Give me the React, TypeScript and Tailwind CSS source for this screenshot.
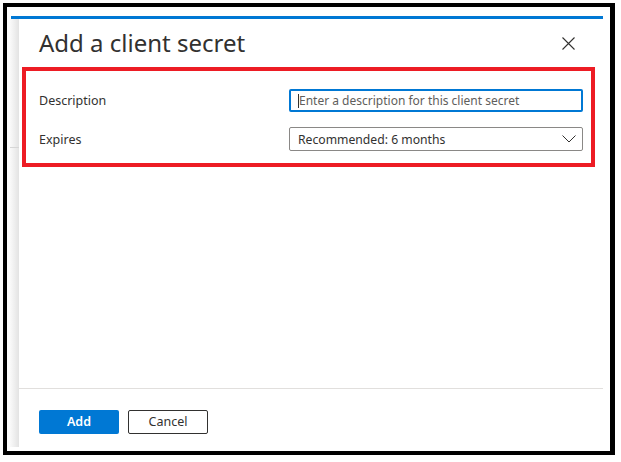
import React from 'react';

// Blade for creating a new client secret
export default function App() {
  return (
    <div className="w-[621px] h-[462px] bg-white pt-[3px] pl-[3px]" style={{ fontFamily: '"Noto Sans", "Open Sans", sans-serif' }}>
      <div className="relative w-[612px] h-[452px] border-[4px] border-r-[5px] border-black bg-white flex flex-col pt-[9px] pl-[3px] pr-[7px] pb-[4px]">
        {/* portal accent bar */}
        <div className="h-[3px] ml-[1px] bg-[#0078d4]" />

        <div className="flex flex-1">
          {/* shadow of the blade over the page behind */}
          <div className="relative w-[9px] bg-gradient-to-r from-[#fafafa] to-[#e3e3e3]">
            <div className="absolute left-0 right-0 top-[128px] h-px bg-[#d6d6d6]" />
          </div>

          <div className="flex-1 flex flex-col bg-white">
            {/* header */}
            <div className="flex items-start justify-between pl-[20px] pr-[28px] pt-[10px] h-[48px]">
              <h1 className="text-[24px] leading-[28px] text-[#323130]">Add a client secret</h1>
              <svg className="mt-[8px]" width="13" height="13" viewBox="0 0 13 13" fill="none" stroke="#323130" strokeWidth="1.1">
                <path d="M0.5 0.5 L12.5 12.5 M12.5 0.5 L0.5 12.5" />
              </svg>
            </div>

            {/* form */}
            <div className="flex flex-col gap-[15px] pl-[20px] pr-[20px] pt-[22px] flex-1">
              <div className="flex items-center">
                <label className="w-[250px] text-[12.5px] text-[#323130] pt-px">Description</label>
                <div className="flex-1 h-[23px] border-[2px] border-[#0078d4] rounded-[2px] flex items-center pl-[7px]">
                  <span className="w-px h-[14px] bg-[#323130]" />
                  <span className="text-[12px] text-[#605e5c] pt-px">Enter a description for this client secret</span>
                </div>
              </div>
              <div className="flex items-center">
                <label className="w-[250px] text-[12.5px] text-[#323130] pt-[2px]">Expires</label>
                <div className="flex-1 h-[24px] border border-[#8a8886] rounded-[2px] flex items-center justify-between pl-[8px] pr-[6px]">
                  <span className="text-[12.2px] text-[#323130] pt-[2px]">Recommended: 6 months</span>
                  <svg width="14" height="8" viewBox="0 0 14 8" fill="none" stroke="#323130" strokeWidth="1">
                    <path d="M0.5 0.5 L7 7 L13.5 0.5" />
                  </svg>
                </div>
              </div>
            </div>

            {/* footer */}
            <div className="border-t border-[#e1dfdd] pl-[20px] pt-[21px] pb-[13px] flex gap-[9px]">
              <button className="w-[80px] h-[24px] bg-[#0078d4] rounded-[2px] text-white text-[12.5px] font-semibold">Add</button>
              <button className="w-[80px] h-[24px] border border-[#323130] rounded-[2px] bg-white text-[#323130] text-[12.5px]">Cancel</button>
            </div>
          </div>
        </div>

        {/* highlight around the form fields */}
        <div className="absolute left-[15px] top-[60px] w-[573px] h-[100px] border-[4px] border-[#ed1c24] pointer-events-none" />
      </div>
    </div>
  );
}
